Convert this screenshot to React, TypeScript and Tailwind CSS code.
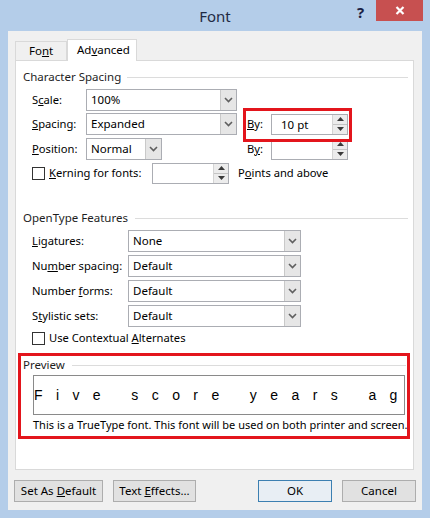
import type { ReactNode } from 'react';

const ui = { fontFamily: '"Noto Sans", "Open Sans", sans-serif' };

function Chevron() {
  return (
    <svg width="9" height="6" viewBox="0 0 9 6">
      <polyline points="1,1 4.5,4.5 8,1" fill="none" stroke="#5f5f5f" strokeWidth="1.6" />
    </svg>
  );
}

function Select({ value, width }: { value: string; width: string }) {
  return (
    <div className={`flex h-[22px] ${width} border border-[#abadb3] bg-white`}>
      <span className="flex-1 pl-[4px] text-[11.5px] leading-[20px] text-black">{value}</span>
      <span className="flex w-[16px] items-center justify-center border-l border-[#c9c9c9] bg-[#e6e6e6]">
        <Chevron />
      </span>
    </div>
  );
}

function Spin({ value, width }: { value?: string; width: string }) {
  return (
    <div className={`flex h-[21px] ${width} border border-[#abadb3] bg-white`}>
      <span className="flex-1 pl-[9px] text-[11.5px] leading-[19px] text-black">{value}</span>
      <span className="flex w-[15px] flex-col border-l border-[#d4d4d4] bg-[#ececec]">
        <span className="flex flex-1 items-center justify-center border-b border-[#c4c4c4]">
          <svg width="7" height="4" viewBox="0 0 7 4">
            <polygon points="0,4 3.5,0 7,4" fill="#3a3a3a" />
          </svg>
        </span>
        <span className="flex flex-1 items-center justify-center">
          <svg width="7" height="4" viewBox="0 0 7 4">
            <polygon points="0,0 3.5,4 7,0" fill="#3a3a3a" />
          </svg>
        </span>
      </span>
    </div>
  );
}

function Check() {
  return <span className="block h-[13px] w-[13px] shrink-0 border border-[#333333] bg-white" />;
}

function Header({ children, gap }: { children: ReactNode; gap: string }) {
  return (
    <div className="flex h-[16px] items-center">
      <span className="text-[11.5px] leading-[16px] text-[#1e1e1e]">{children}</span>
      <span className={`${gap} h-px flex-1 bg-[#dcdcdc]`} />
    </div>
  );
}

function Button({ children, primary, width }: { children: ReactNode; primary?: boolean; width: string }) {
  return (
    <button
      className={`h-[22px] ${width} shrink-0 border text-center text-[11.5px] leading-[20px] text-black ${
        primary ? 'border-[#3c7fb1] bg-[#e8eef4]' : 'border-[#adadad] bg-[#e1e1e1]'
      }`}
      style={ui}
    >
      {children}
    </button>
  );
}

export default function App() {
  return (
    <div className="flex h-[518px] w-[430px] flex-col overflow-hidden bg-[#b4cde9] text-[11.2px]" style={ui}>
      {/* Title bar */}
      <div className="relative flex h-[31px] shrink-0 items-start">
        <div className="flex-1 pt-[5px] text-center text-[15px] leading-[22px] text-[#1f2a44]">Font</div>
        <span className="absolute left-[357px] top-[3px] text-[15px] font-bold leading-[18px] text-[#1a1f45]">?</span>
        <span className="absolute left-[376px] top-0 flex h-[21px] w-[47px] items-center justify-center bg-[#c75050]">
          <svg width="10" height="9" viewBox="0 0 10 9">
            <path d="M1.5 1 L8.5 8 M8.5 1 L1.5 8" stroke="#ffffff" strokeWidth="2.2" />
          </svg>
        </span>
      </div>

      {/* Dialog body */}
      <div className="mx-[8px] flex h-[479px] shrink-0 flex-col bg-[#f0f0f0] pl-[7px] pr-[8px] pt-[8px]">
        {/* Tabs */}
        <div className="flex h-[21px] shrink-0 items-end">
          <div className="h-[19px] w-[52px] border border-b-0 border-[#d9d9d9] bg-[#f0f0f0] pl-[13px] text-[11.5px] leading-[18px] text-black">
            Fo<u>n</u>t
          </div>
          <div className="relative z-10 -mb-px h-[22px] w-[70px] border border-b-0 border-[#d9d9d9] bg-white pl-[9px] text-[11.5px] leading-[20px] text-black">
            Ad<u>v</u>anced
          </div>
        </div>

        {/* Panel */}
        <div className="flex h-[410px] shrink-0 flex-col border border-[#d9d9d9] bg-white pl-[7px] pr-[5px] pt-[8px]">
          <Header gap="ml-[6px]">Character Spacing</Header>

          <div className="mt-[4px] flex flex-col gap-[2px] pl-[9px]">
            <div className="flex h-[22px] items-center">
              <span className="w-[54px]">S<u>c</u>ale:</span>
              <Select value="100%" width="w-[151px]" />
            </div>
            <div className="flex h-[22px] items-center">
              <span className="w-[54px]"><u>S</u>pacing:</span>
              <Select value="Expanded" width="w-[151px]" />
              <div className="relative ml-[10px] flex items-center">
                <span className="w-[24px]"><u>B</u>y:</span>
                <Spin value="10 pt" width="w-[77px]" />
                <span className="absolute -bottom-[7px] -left-[4px] -right-[4px] -top-[6px] border-[3px] border-[#e3151c]" />
              </div>
            </div>
            <div className="mt-[1px] flex h-[22px] items-center">
              <span className="w-[54px]"><u>P</u>osition:</span>
              <Select value="Normal" width="w-[76px]" />
              <div className="ml-[85px] flex items-center">
                <span className="w-[24px]">B<u>y</u>:</span>
                <Spin width="w-[77px]" />
              </div>
            </div>
            <div className="flex h-[22px] items-center">
              <Check />
              <span className="ml-[4px] w-[103px]"><u>K</u>erning for fonts:</span>
              <Spin width="w-[77px]" />
              <span className="ml-[9px]">P<u>o</u>ints and above</span>
            </div>
          </div>

          <div className="mt-[26px]">
            <Header gap="ml-[7px]">OpenType Features</Header>
          </div>

          <div className="mt-[4px] flex flex-col gap-[3px] pl-[9px]">
            <div className="flex h-[22px] items-center">
              <span className="w-[96px]"><u>L</u>igatures:</span>
              <Select value="None" width="w-[173px]" />
            </div>
            <div className="flex h-[22px] items-center">
              <span className="w-[96px] whitespace-nowrap">Nu<u>m</u>ber spacing:</span>
              <Select value="Default" width="w-[173px]" />
            </div>
            <div className="flex h-[22px] items-center">
              <span className="w-[96px]">Number <u>f</u>orms:</span>
              <Select value="Default" width="w-[173px]" />
            </div>
            <div className="flex h-[22px] items-center">
              <span className="w-[96px]">S<u>t</u>ylistic sets:</span>
              <Select value="Default" width="w-[173px]" />
            </div>
            <div className="flex h-[16px] items-center">
              <Check />
              <span className="ml-[4px]">Use Contextual <u>A</u>lternates</span>
            </div>
          </div>

          {/* Preview */}
          <div className="-ml-[5px] -mr-[2px] mt-[7px] flex flex-col border-[3px] border-[#e3151c] pb-[3px] pl-[2px] pr-[1px] pt-[1px]">
            <Header gap="ml-[7px]">Preview</Header>
            <div className="ml-[10px] mr-[1px] mt-[2px] flex h-[40px] items-center overflow-hidden border border-[#8a8a8a]">
              <span
                className="whitespace-nowrap text-[14px] tracking-[13.4px] text-black"
                style={{ fontFamily: '"Liberation Sans", Arial, sans-serif' }}
              >
                Five score years ago
              </span>
            </div>
            <div className="ml-[10px] mt-[2px] whitespace-nowrap text-[11px] leading-[16px] text-black">
              This is a TrueType font. This font will be used on both printer and screen.
            </div>
          </div>
        </div>

        {/* Buttons */}
        <div className="mt-[10px] flex items-center">
          <div className="-ml-[1px]">
            <Button width="w-[89px]">
              Set As <u>D</u>efault
            </Button>
          </div>
          <div className="ml-[10px]">
            <Button width="w-[83px]">
              Text <u>E</u>ffects...
            </Button>
          </div>
          <div className="ml-[62px]">
            <Button primary width="w-[74px]">
              OK
            </Button>
          </div>
          <div className="ml-[10px]">
            <Button width="w-[74px]">Cancel</Button>
          </div>
        </div>
      </div>
    </div>
  );
}
